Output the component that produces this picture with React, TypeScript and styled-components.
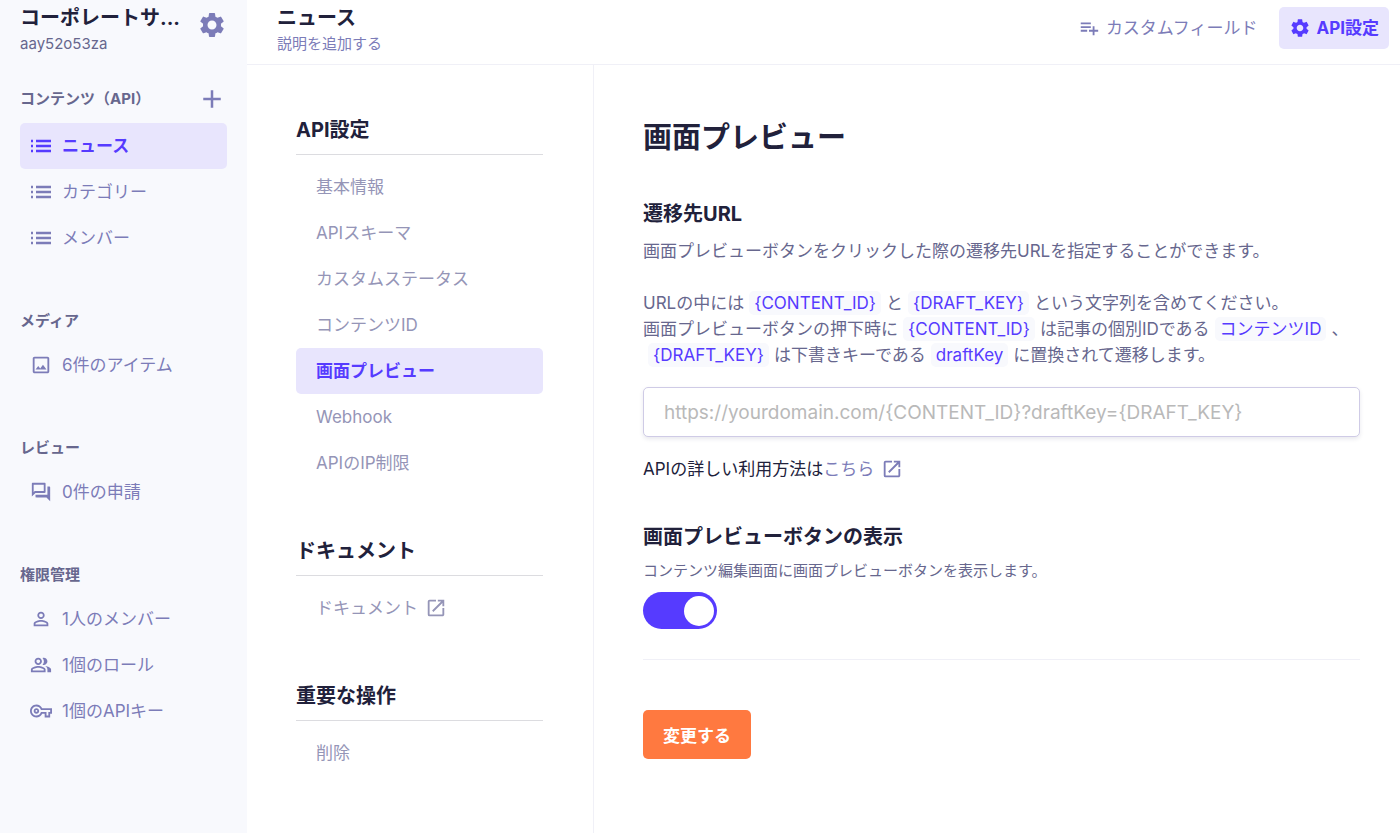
import React, { useState } from "react";
import styled, { createGlobalStyle, css } from "styled-components";
import {
  MdSettings,
  MdAdd,
  MdOutlineImage,
  MdOutlineQuestionAnswer,
  MdPersonOutline,
  MdOutlinePeopleAlt,
  MdOutlineVpnKey,
  MdPlaylistAdd,
  MdOpenInNew,
} from "react-icons/md";

const color = {
  ink: "#21213b",
  muted: "#67678e",
  nav: "#7c7cb8",
  subnav: "#9595b7",
  primary: "#563bff",
  primaryBg: "#e8e5fd",
  side: "#f8f9fd",
  line: "#f0f0f7",
  rule: "#dcdce0",
  orange: "#ff7940",
};

const GlobalStyle = createGlobalStyle`
  *, *::before, *::after { box-sizing: border-box; }
  body {
    margin: 0;
    background: #fff;
    color: ${color.ink};
    font-family: Inter, "Noto Sans CJK JP", sans-serif;
    font-size: 17px;
    line-height: 26px;
  }
  h1, h2, h3, p, ul { margin: 0; padding: 0; }
  ul { list-style: none; }
  a { color: inherit; text-decoration: none; }
  button, input { font-family: inherit; }
  svg { flex: none; display: block; }
`;

const Page = styled.div`
  display: grid;
  grid-template-columns: 247px minmax(0, 1fr);
  min-height: 100vh;
`;

const Sidebar = styled.aside`
  background: ${color.side};
  padding: 5px 20px 20px;
`;

const Service = styled.div`
  display: flex;
  justify-content: space-between;
  align-items: flex-start;
`;

const ServiceName = styled.p`
  white-space: nowrap;
  font-size: 20px;
  font-weight: 700;
`;

const ServiceId = styled.p`
  font-size: 15px;
  color: ${color.muted};
`;

const IconButton = styled.button`
  display: flex;
  align-items: center;
  justify-content: center;
  width: 30px;
  height: 30px;
  padding: 0;
  border: 0;
  background: none;
  color: ${color.nav};
  cursor: pointer;
`;

const ServiceSettings = styled(IconButton)`
  margin-top: 5px;
`;

const NavGroup = styled.section`
  margin-bottom: 45px;
`;

const FirstNavGroup = styled(NavGroup)`
  margin-top: 27px;
`;

const NavHead = styled.div`
  display: flex;
  align-items: center;
  justify-content: space-between;
  height: 30px;
  margin-bottom: 6px;
`;

const FirstNavHead = styled(NavHead)`
  margin-bottom: 9px;
`;

const NavTitle = styled.h2`
  font-size: 15px;
  font-weight: 700;
  color: ${color.muted};
`;

const selected = css`
  background: ${color.primaryBg};
  color: ${color.primary};
  font-weight: 700;
`;

const NavLink = styled.a<{ $active?: boolean }>`
  display: flex;
  align-items: center;
  gap: 10px;
  height: 46px;
  padding: 0 10px;
  border-radius: 5px;
  color: ${color.nav};
  ${(p) => p.$active && selected}
`;

const IconSlot = styled.span`
  display: flex;
  justify-content: center;
  width: 22px;
`;

const Content = styled.div`
  display: flex;
  flex-direction: column;
`;

const TopBar = styled.header`
  display: flex;
  align-items: center;
  justify-content: space-between;
  height: 65px;
  padding: 0 11px 8px 30px;
  border-bottom: 1px solid ${color.line};
`;

const ApiHeading = styled.div`
  padding-top: 5px;
`;

const ApiName = styled.h1`
  font-size: 20px;
  line-height: 26px;
`;

const Describe = styled.a`
  display: block;
  font-size: 15px;
  color: ${color.nav};
`;

const TopActions = styled.nav`
  display: flex;
  align-items: center;
  gap: 11px;
`;

const TopLink = styled.a<{ $active?: boolean }>`
  display: flex;
  align-items: center;
  gap: 6px;
  height: 42px;
  padding: 0 10px;
  border-radius: 5px;
  color: ${color.nav};
  ${(p) => p.$active && selected}
`;

const Body = styled.div`
  flex: 1;
  display: grid;
  grid-template-columns: 347px minmax(0, 1fr);
`;

const SubNav = styled.nav`
  padding: 48px 50px 48px 49px;
  border-right: 1px solid ${color.line};
`;

const SubGroup = styled.section`
  margin-bottom: 48px;
`;

const SubTitle = styled.h2`
  padding: 4px 0 11px;
  margin-bottom: 9px;
  border-bottom: 1px solid ${color.rule};
  font-size: 20px;
  line-height: 26px;
`;

const SubLink = styled.a<{ $active?: boolean }>`
  display: flex;
  align-items: center;
  gap: 7px;
  height: 46px;
  padding: 0 20px;
  border-radius: 5px;
  color: ${color.subnav};
  ${(p) => p.$active && selected}
`;

const Main = styled.main`
  padding: 51px 40px 50px 49px;
`;

const Title = styled.h2`
  margin-bottom: 41px;
  font-size: 29px;
  line-height: 44px;
`;

const FieldLabel = styled.label`
  display: block;
  font-size: 20px;
  font-weight: 700;
  line-height: 26px;
`;

const Text = styled.p`
  margin-top: 11px;
  color: ${color.muted};
`;

const Guide = styled(Text)`
  margin-top: 26px;
`;

const Code = styled.code`
  margin: 0 5px;
  padding: 2px 5px;
  border-radius: 5px;
  background: ${color.side};
  color: ${color.primary};
  font-family: inherit;
  font-size: 17px;
`;

const UrlInput = styled.input`
  display: block;
  width: 100%;
  height: 50px;
  margin-top: 19px;
  padding: 0 20px;
  border: 1px solid #cfcbe6;
  border-radius: 5px;
  box-shadow: 0 2px 4px rgba(30, 30, 80, 0.1);
  font-size: 19px;
  color: ${color.ink};
  &::placeholder { color: #b9b9b9; opacity: 1; }
`;

const Help = styled.p`
  display: flex;
  align-items: center;
  margin: 19px 0 42px;
`;

const HelpLink = styled.a`
  display: flex;
  align-items: center;
  gap: 7px;
  color: ${color.nav};
`;

const Note = styled.p`
  margin: 8px 0;
  font-size: 15px;
  color: ${color.muted};
`;

const Switch = styled.input`
  appearance: none;
  display: block;
  width: 74px;
  height: 37px;
  margin: 0;
  padding: 4px 3px 3px;
  border-radius: 19px;
  background: #c9c9d8;
  cursor: pointer;
  &::before {
    content: "";
    display: block;
    width: 30px;
    height: 30px;
    border-radius: 50%;
    background: #fff;
  }
  &:checked { background: ${color.primary}; }
  &:checked::before { margin-left: 38px; }
`;

const Submit = styled.button`
  display: block;
  height: 49px;
  padding: 0 20px;
  border: 0;
  border-radius: 5px;
  background: ${color.orange};
  color: #fff;
  font-size: 17px;
  font-weight: 700;
  cursor: pointer;
`;

const Divider = styled.hr`
  height: 1px;
  margin: 30px 0 50px;
  border: 0;
  background: ${color.line};
`;

const ListIcon = () => (
  <svg width="20" height="14" viewBox="0 0 20 14" fill="currentColor" aria-hidden="true">
    <path d="M0 .8h2v2.4H0zM5 .8h15v2.4H5zM0 5.8h2v2.4H0zM5 5.8h15v2.4H5zM0 10.8h2v2.4H0zM5 10.8h15v2.4H5z" />
  </svg>
);

type Item = { label: string; icon: React.ReactNode; active?: boolean };

const NavList = ({ items }: { items: Item[] }) => (
  <ul>
    {items.map((item) => (
      <li key={item.label}>
        <NavLink href="#" $active={item.active}>
          <IconSlot>{item.icon}</IconSlot>
          {item.label}
        </NavLink>
      </li>
    ))}
  </ul>
);

const groups: { title: string; items: Item[] }[] = [
  { title: "メディア", items: [{ label: "6件のアイテム", icon: <MdOutlineImage size={22} /> }] },
  { title: "レビュー", items: [{ label: "0件の申請", icon: <MdOutlineQuestionAnswer size={22} /> }] },
  {
    title: "権限管理",
    items: [
      { label: "1人のメンバー", icon: <MdPersonOutline size={22} /> },
      { label: "1個のロール", icon: <MdOutlinePeopleAlt size={22} /> },
      { label: "1個のAPIキー", icon: <MdOutlineVpnKey size={22} /> },
    ],
  },
];

const settings = ["基本情報", "APIスキーマ", "カスタムステータス", "コンテンツID", "画面プレビュー", "Webhook", "APIのIP制限"];

export default function App() {
  const [shown, setShown] = useState(true);
  return (
    <>
      <GlobalStyle />
      <Page lang="ja">
        <Sidebar>
          <Service>
            <div>
              <ServiceName>コーポレートサ...</ServiceName>
              <ServiceId>aay52o53za</ServiceId>
            </div>
            <ServiceSettings aria-label="サービス設定">
              <MdSettings size={30} />
            </ServiceSettings>
          </Service>
          <FirstNavGroup>
            <FirstNavHead>
              <NavTitle>コンテンツ（API）</NavTitle>
              <IconButton aria-label="APIを追加">
                <MdAdd size={30} />
              </IconButton>
            </FirstNavHead>
            <NavList
              items={[
                { label: "ニュース", icon: <ListIcon />, active: true },
                { label: "カテゴリー", icon: <ListIcon /> },
                { label: "メンバー", icon: <ListIcon /> },
              ]}
            />
          </FirstNavGroup>
          {groups.map((group) => (
            <NavGroup key={group.title}>
              <NavHead>
                <NavTitle>{group.title}</NavTitle>
              </NavHead>
              <NavList items={group.items} />
            </NavGroup>
          ))}
        </Sidebar>
        <Content>
          <TopBar>
            <ApiHeading>
              <ApiName>ニュース</ApiName>
              <Describe href="#">説明を追加する</Describe>
            </ApiHeading>
            <TopActions>
              <TopLink href="#">
                <MdPlaylistAdd size={22} />
                カスタムフィールド
              </TopLink>
              <TopLink href="#" $active>
                <MdSettings size={22} />
                API設定
              </TopLink>
            </TopActions>
          </TopBar>
          <Body>
            <SubNav>
              <SubGroup>
                <SubTitle>API設定</SubTitle>
                {settings.map((label) => (
                  <SubLink key={label} href="#" $active={label === "画面プレビュー"}>
                    {label}
                  </SubLink>
                ))}
              </SubGroup>
              <SubGroup>
                <SubTitle>ドキュメント</SubTitle>
                <SubLink href="#">
                  ドキュメント
                  <MdOpenInNew size={22} />
                </SubLink>
              </SubGroup>
              <SubGroup>
                <SubTitle>重要な操作</SubTitle>
                <SubLink href="#">削除</SubLink>
              </SubGroup>
            </SubNav>
            <Main>
              <Title>画面プレビュー</Title>
              <FieldLabel htmlFor="preview-url">遷移先URL</FieldLabel>
              <Text>画面プレビューボタンをクリックした際の遷移先URLを指定することができます。</Text>
              <Guide>
                URLの中には<Code>{"{CONTENT_ID}"}</Code>と<Code>{"{DRAFT_KEY}"}</Code>という文字列を含めてください。
                <br />
                画面プレビューボタンの押下時に<Code>{"{CONTENT_ID}"}</Code>は記事の個別IDである<Code>コンテンツID</Code>、
                <br />
                <Code>{"{DRAFT_KEY}"}</Code>は下書きキーである<Code>draftKey</Code>に置換されて遷移します。
              </Guide>
              <UrlInput
                id="preview-url"
                type="text"
                placeholder="https://yourdomain.com/{CONTENT_ID}?draftKey={DRAFT_KEY}"
              />
              <Help>
                APIの詳しい利用方法は
                <HelpLink href="#">
                  こちら
                  <MdOpenInNew size={22} />
                </HelpLink>
              </Help>
              <FieldLabel htmlFor="preview-button">画面プレビューボタンの表示</FieldLabel>
              <Note>コンテンツ編集画面に画面プレビューボタンを表示します。</Note>
              <Switch
                id="preview-button"
                type="checkbox"
                checked={shown}
                onChange={(e) => setShown(e.target.checked)}
              />
              <Divider />
              <Submit type="button">変更する</Submit>
            </Main>
          </Body>
        </Content>
      </Page>
    </>
  );
}
